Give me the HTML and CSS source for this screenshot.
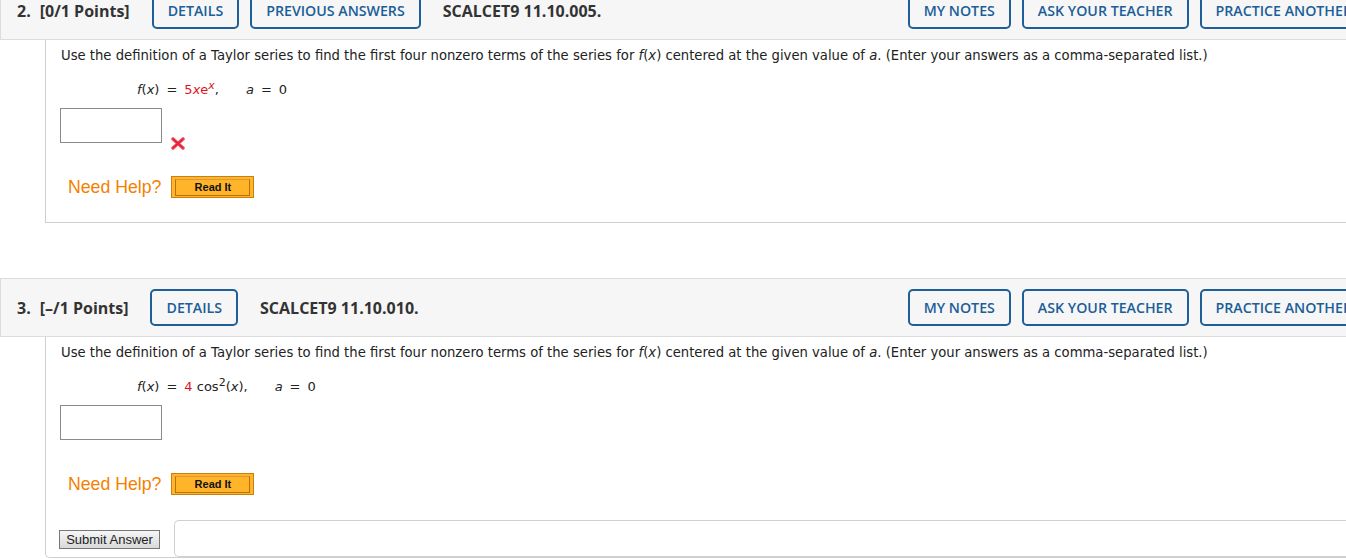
FILE: index.html
```html
<!DOCTYPE html>
<html lang="en">

<head>
  <meta charset="UTF-8">
  <meta name="viewport" content="width=device-width, initial-scale=1.0">
  <title>Assignment</title>
  <link rel="stylesheet" href="styles.css">
</head>

<body>
  <div class="page">

    <div class="question">
      <div class="q-head">
        <span class="q-num">2.</span>
        <span class="q-points">[0/1 Points]</span>
        <button class="btn">DETAILS</button>
        <button class="btn">PREVIOUS ANSWERS</button>
        <span class="q-code">SCALCET9 11.10.005.</span>
        <div class="q-tools">
          <button class="btn">MY NOTES</button>
          <button class="btn">ASK YOUR TEACHER</button>
          <button class="btn">PRACTICE ANOTHER</button>
        </div>
      </div>
      <div class="q-body">
        <p class="q-text">Use the definition of a Taylor series to find the first four nonzero terms of the series for <i>f</i>(<i>x</i>) centered at the given value of <i>a</i>. (Enter your answers as a comma-separated list.)</p>
        <div class="formula">
          <span class="fx"><i>f</i>(<i>x</i>)<span class="op">=</span><span class="red">5<i>x</i>e<sup><i>x</i></sup></span>,</span>
          <span class="at"><i>a</i><span class="op">=</span>0</span>
        </div>
        <div class="answer">
          <span class="answer-box"></span>
          <svg class="mark" width="14" height="13" viewBox="0 0 14 13">
            <path d="M2 2 L12 11 M12 2 L2 11" stroke="#f25a68" stroke-width="3.6" stroke-linecap="round" />
            <path d="M2 2 L12 11 M12 2 L2 11" stroke="#e31a32" stroke-width="1.6" stroke-linecap="round" />
          </svg>
        </div>
        <div class="help">
          <span class="help-label">Need Help?</span>
          <button class="read-it"><span>Read It</span></button>
        </div>
      </div>
    </div>

    <div class="question">
      <div class="q-head">
        <span class="q-num">3.</span>
        <span class="q-points">[&ndash;/1 Points]</span>
        <button class="btn">DETAILS</button>
        <span class="q-code">SCALCET9 11.10.010.</span>
        <div class="q-tools">
          <button class="btn">MY NOTES</button>
          <button class="btn">ASK YOUR TEACHER</button>
          <button class="btn">PRACTICE ANOTHER</button>
        </div>
      </div>
      <div class="q-body last">
        <p class="q-text">Use the definition of a Taylor series to find the first four nonzero terms of the series for <i>f</i>(<i>x</i>) centered at the given value of <i>a</i>. (Enter your answers as a comma-separated list.)</p>
        <div class="formula">
          <span class="fx"><i>f</i>(<i>x</i>)<span class="op">=</span><span class="red">4</span> cos<sup>2</sup>(<i>x</i>),</span>
          <span class="at"><i>a</i><span class="op">=</span>0</span>
        </div>
        <div class="answer">
          <span class="answer-box"></span>
        </div>
        <div class="help">
          <span class="help-label">Need Help?</span>
          <button class="read-it"><span>Read It</span></button>
        </div>
        <div class="submit-row">
          <button class="submit">Submit Answer</button>
          <div class="submit-panel"></div>
        </div>
      </div>
    </div>

  </div>
</body>

</html>
```

FILE: styles.css
```css
html,
body {
  margin: 0;
  padding: 0;
  overflow: hidden;
  background: #fff;
}

.page {
  width: 1385px;
  margin-top: -19px;
}

.question {
  margin-bottom: 55px;
}

.q-head {
  display: flex;
  align-items: center;
  background: #f6f6f6;
  border: 1px solid #dcdcdc;
  padding: 10px 16px;
  font-family: "Open Sans", sans-serif;
  font-weight: 700;
  font-size: 16px;
  color: #333;
}

.q-num {
  margin-right: 9px;
}

.q-points {
  margin-right: 22px;
}

.q-code {
  margin-left: 11px;
}

.btn {
  font-family: "Open Sans", sans-serif;
  font-weight: 600;
  font-size: 14.2px;
  color: #1b5e98;
  background: transparent;
  border: 2px solid #1f5f98;
  border-radius: 5px;
  height: 37px;
  padding: 0 14px;
  margin-right: 11px;
  cursor: pointer;
}

.q-tools {
  margin-left: auto;
  display: flex;
}

.q-tools .btn:last-child {
  margin-right: 0;
}

.q-body {
  margin-left: 45px;
  border-left: 1px solid #cfcfcf;
  border-bottom: 1px solid #cfcfcf;
  padding: 8px 15px 24px;
  font-family: "DejaVu Sans", Verdana, sans-serif;
  font-size: 13.2px;
  color: #222;
}

.q-text {
  margin: 0;
  line-height: 16px;
}

.formula {
  margin: 16px 0 0 76px;
  line-height: 20px;
  font-size: 13px;
  display: flex;
}

.formula sup {
  font-size: 11px;
  line-height: 0;
}

.op {
  margin: 0 7px;
}

.at {
  margin-left: 27px;
}

.red {
  color: #e0141e;
}

.answer {
  margin-top: 8px;
  height: 35px;
  position: relative;
}

.answer-box {
  display: block;
  width: 100px;
  height: 33px;
  border: 1px solid #8a8a8a;
  margin-left: -1px;
}

.mark {
  position: absolute;
  left: 110px;
  top: 29px;
}

.help {
  display: flex;
  align-items: center;
  margin-top: 33px;
  margin-left: 7px;
}

.help-label {
  font-family: "Liberation Sans", Arial, sans-serif;
  font-size: 17.7px;
  color: #f57f00;
  margin-right: 10px;
}

.read-it {
  width: 83px;
  height: 22px;
  padding: 2px 3px 3px;
  background: #ffb42a;
  border: 1px solid #c9800f;
  cursor: pointer;
}

.read-it span {
  display: block;
  height: 15px;
  border: 1px solid #b97200;
  border-top-color: #d99a3a;
  font-family: "Liberation Sans", Arial, sans-serif;
  font-weight: 700;
  font-size: 11px;
  line-height: 14px;
  color: #111;
}

.q-body.last {
  padding-bottom: 0;
  border-bottom-left-radius: 5px;
}

.submit-row {
  display: flex;
  margin-top: 25px;
  height: 37px;
  margin-left: -2px;
}

.submit {
  align-self: flex-start;
  margin-top: 10px;
  height: 19px;
  width: 101px;
  padding: 0;
  font-family: "Liberation Sans", Arial, sans-serif;
  font-size: 13px;
  color: #222;
  background: linear-gradient(#f6f6f6, #d9d9d9);
  border: 1px solid #777;
  cursor: pointer;
}

.submit-panel {
  flex: 1;
  margin-left: 14px;
  border: 1px solid #d0d0d0;
  border-right: 0;
  border-radius: 5px 0 0 5px;
}
```
